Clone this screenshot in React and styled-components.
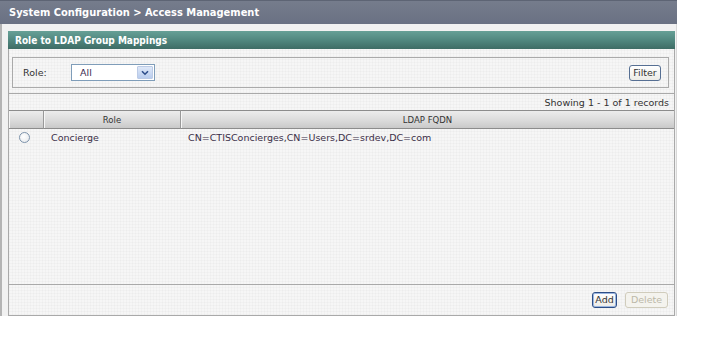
import React from 'react'
import styled, { createGlobalStyle } from 'styled-components'

const GlobalStyle = createGlobalStyle`
  html, body { margin: 0; padding: 0; background: #ffffff; }
  body { font-family: "DejaVu Sans", Verdana, sans-serif; font-size: 9.5px; color: #333; }
`

const texture = `
  background-color: #f6f6f6;
  background-image:
    repeating-linear-gradient(0deg, rgba(0,0,0,0.018) 0 1px, transparent 1px 3px),
    repeating-linear-gradient(90deg, rgba(0,0,0,0.018) 0 1px, transparent 1px 3px);
`

const boldFont = `
  font-family: "DejaVu Sans Condensed", "DejaVu Sans", Verdana, sans-serif;
  font-stretch: condensed;
  font-weight: bold;
`

// Marco general
const Frame = styled.div`
  width: 677px;
  height: 316px;
  box-sizing: border-box;
  border-left: 2px solid #b4b4b4;
  border-right: 1px solid #d8d8d8;
  background: #f1f1f1;
  display: flex;
  flex-direction: column;
`

const TopBar = styled.div`
  height: 24px;
  margin: 0 -1px 0 -2px;
  padding-left: 9px;
  display: flex;
  align-items: center;
  background: linear-gradient(#757c8c, #6a7183);
  border-top: 1px solid #5d6474;
  box-sizing: border-box;
  color: #ffffff;
  font-size: 11px;
  ${boldFont}
`

const Body = styled.div`
  flex: 1;
  display: flex;
  padding: 7px 1px 0 6px;
`

const Panel = styled.div`
  flex: 1;
  display: flex;
  flex-direction: column;
  border: 1px solid #a9a9a9;
  border-top: none;
  ${texture}
`

const PanelTitle = styled.div`
  height: 18px;
  margin: 0 -1px;
  padding-left: 7px;
  display: flex;
  align-items: center;
  background: linear-gradient(#66a096, #4f857d 55%, #3e6c65);
  color: #ffffff;
  font-size: 10px;
  ${boldFont}
`

const FilterArea = styled.div`
  padding: 8px 5px 5px 3px;
  border-bottom: 1px solid #a9a9a9;
`

const FilterBox = styled.div`
  height: 31px;
  box-sizing: border-box;
  border: 1px solid #aaaaaa;
  display: flex;
  align-items: center;
  padding: 0 7px 0 10px;
`

const Label = styled.span`
  width: 48px;
  color: #333;
`

const Select = styled.div`
  width: 84px;
  height: 17px;
  box-sizing: border-box;
  border: 1px solid #7f9db9;
  background: #ffffff;
  display: flex;
  align-items: stretch;
`

const SelectValue = styled.span`
  flex: 1;
  padding-left: 8px;
  display: flex;
  align-items: center;
  color: #3a2a50;
`

const SelectArrow = styled.span`
  width: 14px;
  margin: 1px;
  border-radius: 1px;
  background: linear-gradient(#dfe8f8, #b9cdee);
  border: 1px solid #bccbe6;
  display: flex;
  align-items: center;
  justify-content: center;
`

const Spacer = styled.div`
  flex: 1;
`

const Button = styled.button`
  height: 16px;
  width: ${p => p.w}px;
  padding: 0;
  font-family: "DejaVu Sans", Verdana, sans-serif;
  font-size: 9.5px;
  line-height: 12px;
  border-radius: 3px;
  color: ${p => (p.disabled ? '#bcb8a8' : '#333')};
  border: 1px solid ${p => (p.disabled ? '#d0ccbc' : p.focused ? '#2d4e86' : '#566f93')};
  background: ${p => (p.disabled ? '#f4f3ee' : 'linear-gradient(#ffffff, #ecebe6)')};
  box-shadow: ${p => (p.focused ? 'inset 0 0 0 1px #9bb6e0' : 'none')};
`

const StatusBar = styled.div`
  height: 16px;
  display: flex;
  align-items: center;
  justify-content: flex-end;
  padding-right: 5px;
  color: #333;
`

const Grid = styled.div`
  display: grid;
  grid-template-columns: 34px 137px 1fr;
`

const HeadCell = styled.div`
  height: 17px;
  display: flex;
  align-items: center;
  justify-content: center;
  font-size: 8.5px;
  color: #333;
  background: linear-gradient(#ececec, #d9d9d9 60%, #c9c9c9);
  border-top: 1px solid #8c8c8c;
  border-bottom: 1px solid #8c8c8c;
  border-left: ${p => (p.first ? 'none' : '1px solid #999')};
  box-shadow: inset 1px 0 0 #f6f6f6;
`

const Cell = styled.div`
  height: 17px;
  display: flex;
  align-items: center;
  justify-content: ${p => (p.center ? 'center' : 'flex-start')};
  padding-left: ${p => (p.center ? 0 : 8)}px;
  color: #3b2f48;
`

const Radio = styled.span`
  width: 9px;
  height: 9px;
  margin-left: -4px;
  border-radius: 50%;
  border: 1px solid #7d93ab;
  background: radial-gradient(circle at 40% 40%, #ffffff, #e3e6ea);
`

const TableSpace = styled.div`
  flex: 1;
  border-bottom: 1px solid #a9a9a9;
`

const Footer = styled.div`
  height: 30px;
  display: flex;
  align-items: center;
  justify-content: flex-end;
  gap: 8px;
  padding-right: 6px;
`

const Chevron = () => (
  <svg width="8" height="6" viewBox="0 0 8 6">
    <path d="M1 1.2 L4 4.2 L7 1.2" fill="none" stroke="#2d4d8a" strokeWidth="1.6" />
  </svg>
)

const rows = [{ role: 'Concierge', fqdn: 'CN=CTISConcierges,CN=Users,DC=srdev,DC=com' }]

const App = () => {
  return (
    <>
      <GlobalStyle />
      <Frame>
        <TopBar>System Configuration &gt; Access Management</TopBar>
        <Body>
          <Panel>
            <PanelTitle>Role to LDAP Group Mappings</PanelTitle>
            <FilterArea>
              <FilterBox>
                <Label>Role:</Label>
                <Select>
                  <SelectValue>All</SelectValue>
                  <SelectArrow><Chevron /></SelectArrow>
                </Select>
                <Spacer />
                <Button w={32}>Filter</Button>
              </FilterBox>
            </FilterArea>
            <StatusBar>Showing 1 - 1 of 1 records</StatusBar>
            <Grid>
              <HeadCell first />
              <HeadCell>Role</HeadCell>
              <HeadCell>LDAP FQDN</HeadCell>
              {rows.map((r, i) => (
                <React.Fragment key={i}>
                  <Cell center><Radio /></Cell>
                  <Cell>{r.role}</Cell>
                  <Cell>{r.fqdn}</Cell>
                </React.Fragment>
              ))}
            </Grid>
            <TableSpace />
            <Footer>
              <Button focused w={25}>Add</Button>
              <Button disabled w={43}>Delete</Button>
            </Footer>
          </Panel>
        </Body>
      </Frame>
    </>
  )
}

export default App
